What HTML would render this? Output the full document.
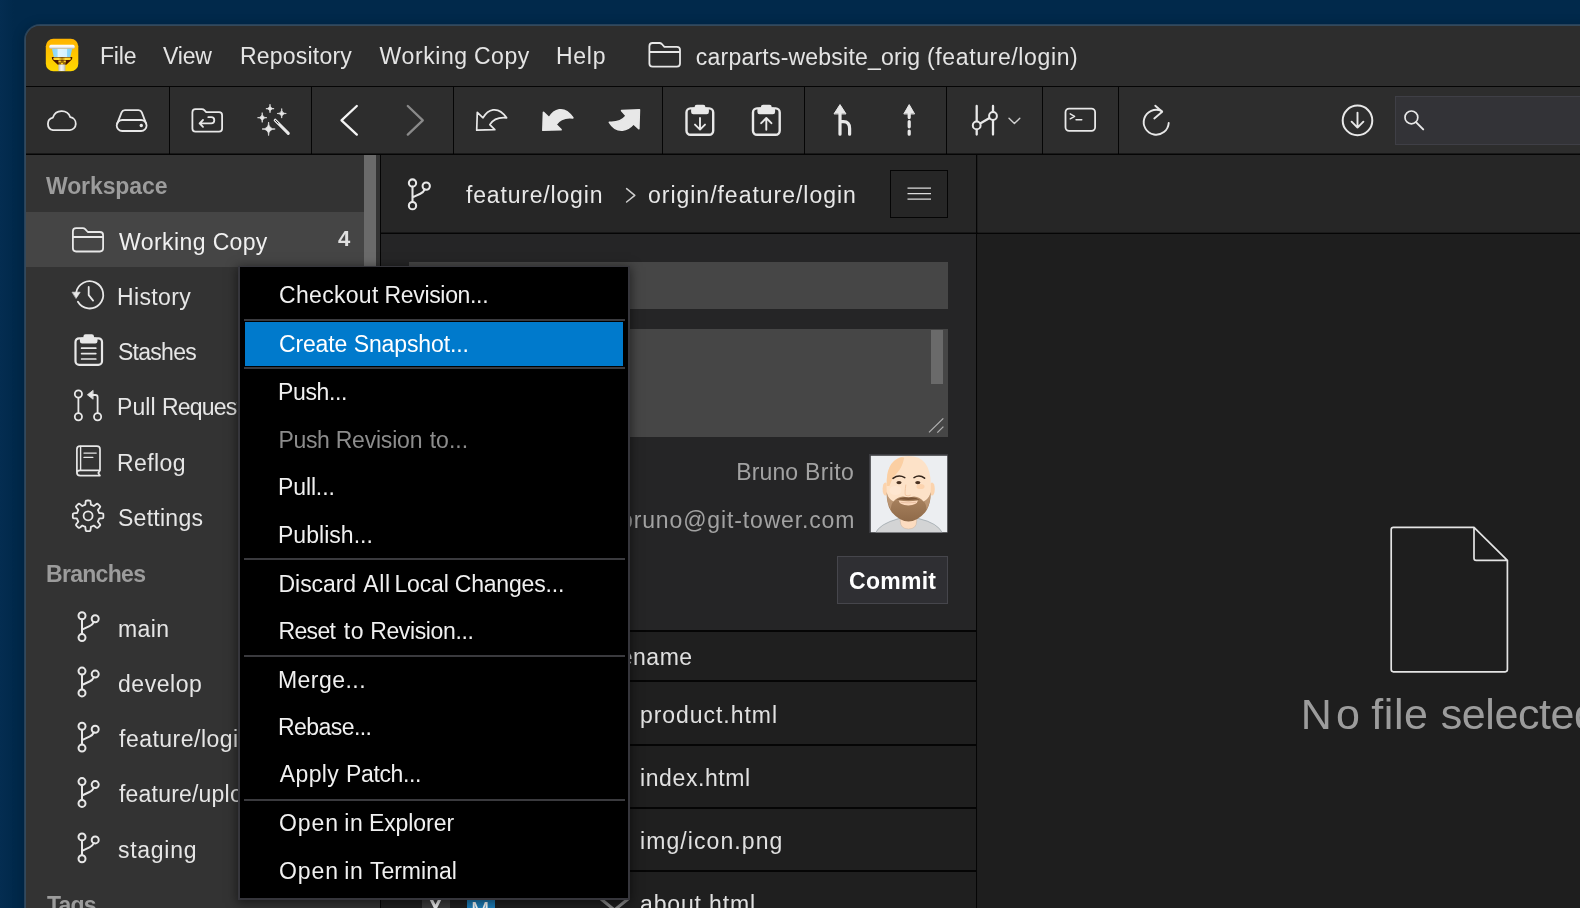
<!DOCTYPE html>
<html lang="en">
<head>
<meta charset="utf-8">
<title>Tower - carparts-website_orig (feature/login)</title>
<style>
html,body{margin:0;padding:0}
body{width:1580px;height:908px;overflow:hidden;position:relative;background:#012a4c;font-family:'Liberation Sans',sans-serif}
.bg{position:absolute;left:0;top:0;width:1580px;height:908px;background:linear-gradient(90deg,#042d51 0,#01294b 14px,#01294b 100%)}
.abs,.t,svg.ov{position:absolute}
.t{will-change:transform;height:60px;line-height:60px;white-space:pre;font-family:'Liberation Sans',sans-serif}
.win{left:25px;top:25px;width:1600px;height:920px;background:#34495b;border-radius:15px 0 0 0;box-shadow:0 0 0 1px #27425b,0 2px 12px 2px rgba(0,0,0,.2)}
.clip{left:0;top:0;width:1580px;height:908px;overflow:hidden;clip-path:inset(26px 0 0 26px round 14px 0 0 0)}
.clip>*{position:absolute}
.w{position:absolute;top:0;height:60px;white-space:pre}
.ln{background:#050505}
</style>
</head>
<body>
<div class="bg"></div>
<div class="abs win"></div>
<div class="abs clip">
<!-- title + toolbar -->
<div style="left:25px;top:25px;width:1555px;height:883px;background:#2d2d2d"></div>
<div style="left:25px;top:25px;width:1555px;height:61px;background:#2d2d2d"></div>
<div class="ln" style="left:25px;top:86px;width:1555px;height:1px"></div>
<div style="left:25px;top:87px;width:1555px;height:67px;background:#2d2d2d"></div>
<div class="ln" style="left:169px;top:87px;width:1px;height:67px"></div>
<div class="ln" style="left:311px;top:87px;width:1px;height:67px"></div>
<div class="ln" style="left:453px;top:87px;width:1px;height:67px"></div>
<div class="ln" style="left:662px;top:87px;width:1px;height:67px"></div>
<div class="ln" style="left:804px;top:87px;width:1px;height:67px"></div>
<div class="ln" style="left:946px;top:87px;width:1px;height:67px"></div>
<div class="ln" style="left:1042px;top:87px;width:1px;height:67px"></div>
<div class="ln" style="left:1118px;top:87px;width:1px;height:67px"></div>

<div class="ln" style="left:25px;top:154px;width:1555px;height:1px;box-shadow:0 -1px 0 rgba(0,0,0,.45)"></div>
<!-- search box -->
<div style="left:1395px;top:96px;width:200px;height:47px;background:#333337;border:1px solid #3f3f46"></div>
<!-- sidebar -->
<div style="left:25px;top:155px;width:356px;height:753px;background:#333333"></div>
<div style="left:25px;top:212px;width:339px;height:55px;background:#454545"></div>
<div style="left:364px;top:155px;width:12px;height:560px;background:#6a6a6a"></div>
<div class="ln" style="left:380px;top:155px;width:1px;height:753px"></div>
<!-- mid panel -->
<div style="left:381px;top:155px;width:595px;height:78px;background:#262626"></div>
<div class="ln" style="left:381px;top:233px;width:1199px;height:1px;box-shadow:0 -1px 0 rgba(0,0,0,.4)"></div>
<div style="left:381px;top:234px;width:595px;height:397px;background:#252526"></div>
<div style="left:890px;top:170px;width:56px;height:46px;border:1px solid #050505;background:#262626"></div>
<div style="left:409px;top:262px;width:539px;height:47px;background:#464646"></div>
<div style="left:409px;top:329px;width:539px;height:108px;background:#464646"></div>
<div style="left:931px;top:330px;width:12px;height:54px;background:#6a6a6a"></div>
<div style="left:837px;top:556px;width:109px;height:46px;background:#2f2f33;border:1px solid #46464c"></div>
<!-- avatar -->
<div style="left:869px;top:454px;width:79px;height:79px;background:#3c3c40"></div>
<!-- file list -->
<div class="ln" style="left:381px;top:630px;width:595px;height:2px"></div>
<div style="left:381px;top:632px;width:595px;height:276px;background:#1f1f1f"></div>
<div class="ln" style="left:381px;top:680px;width:595px;height:2px"></div>
<div class="ln" style="left:381px;top:744px;width:595px;height:2px"></div>
<div class="ln" style="left:381px;top:807px;width:595px;height:2px"></div>
<div class="ln" style="left:381px;top:870px;width:595px;height:2px"></div>
<div style="left:422px;top:890px;width:28px;height:28px;background:#3c3c3c"></div>
<div style="left:467px;top:892px;width:28px;height:28px;background:#1c7db8"></div>
<!-- right panel -->
<div class="ln" style="left:976px;top:155px;width:1px;height:753px;box-shadow:1px 0 0 rgba(0,0,0,.35)"></div>
<div style="left:978px;top:155px;width:602px;height:77px;background:#262626"></div>
<div style="left:978px;top:234px;width:602px;height:674px;background:#1e1e1e"></div>
<svg class="ov" style="left:0;top:0;z-index:2" width="1580" height="908" viewBox="0 0 1580 908" fill="none" stroke="#e8e8e8" stroke-width="1.8" stroke-linecap="round" stroke-linejoin="round">
<!-- title folder -->
<path d="M649.4 46.2Q649.4 43 652.6 43H659.4Q660.8 43 661.8 44L664.4 46.8H676.8Q680 46.8 680 50V63.4Q680 66.6 676.8 66.6H652.6Q649.4 66.6 649.4 63.4ZM649.4 52H680"/>
<!-- cloud -->
<path d="M53 130.1H69.8A6.5 6.5 0 0 0 70.3 117.2A9.2 9.2 0 0 0 52.9 117.6A6.4 6.4 0 0 0 53 130.1Z"/>
<!-- drive -->
<rect x="116.7" y="120" width="29.9" height="11" rx="5.5"/>
<path d="M117.2 123.6L121.6 112.4Q122.5 110.2 124.9 110.2H138.5Q140.9 110.2 141.8 112.4L146.1 123.6"/>
<circle cx="141.3" cy="125.5" r="1.7" fill="#e8e8e8" stroke="none"/>
<!-- folder back -->
<path d="M192.4 112.2Q192.4 109.1 195.5 109.1H201.8Q203.3 109.1 204.3 110.2L206.2 112.2H219Q222.1 112.2 222.1 115.3V128.5Q222.1 131.6 219 131.6H195.5Q192.4 131.6 192.4 128.5Z"/>
<path d="M199.6 123.4H211.2A3.1 3.1 0 0 0 211.2 117.2H208.3M203 120L199.6 123.4L203 126.8"/>
<!-- wand -->
<g fill="#e8e8e8" stroke="none">
<path d="M270 104.6Q270 108.7 274.1 108.7Q270 108.7 270 112.8Q270 108.7 265.900 108.7Q270 108.7 270 104.6Z"/>
<path d="M281.7 108.9Q281.7 113.5 286.3 113.5Q281.7 113.5 281.7 118.1Q281.7 113.5 277.1 113.5Q281.7 113.5 281.7 108.9Z"/>
<path d="M262.2 113Q262.2 117.7 266.9 117.7Q262.2 117.7 262.2 122.4Q262.2 117.7 257.5 117.7Q262.2 117.7 262.2 113Z"/>
<path d="M268.6 122.4Q268.6 129 275.2 129Q268.6 129 268.6 135.6Q268.6 129 262 129Q268.6 129 268.6 122.4Z"/>
</g>
<g stroke-width="0.7" stroke-linejoin="miter"><path d="M270 104.6Q270 108.7 274.1 108.7Q270 108.7 270 112.8Q270 108.7 265.900 108.7Q270 108.7 270 104.6Z"/><path d="M281.7 108.9Q281.7 113.5 286.3 113.5Q281.7 113.5 281.7 118.1Q281.7 113.5 277.1 113.5Q281.7 113.5 281.7 108.9Z"/><path d="M262.2 113Q262.2 117.7 266.9 117.7Q262.2 117.7 262.2 122.4Q262.2 117.7 257.5 117.7Q262.2 117.7 262.2 113Z"/><path d="M268.6 122.4Q268.6 129 275.2 129Q268.6 129 268.6 135.6Q268.6 129 262 129Q268.6 129 268.6 122.4Z"/></g>
<path d="M275.2 120.2L288.3 133.4" stroke-width="3"/>
<path d="M275.4 120.4L278.2 123.2" stroke="#2d2d2d" stroke-width="1"/>
<!-- back / forward -->
<path d="M356.8 106L341.5 120.3L356.8 134.6" stroke="#f4f4f4" stroke-width="2.3"/>
<path d="M407.8 106L422.8 120.3L407.8 134.6" stroke="#8a8a8a" stroke-width="2.3"/>
<!-- fetch (outline) -->
<path d="M477.3 112.4L476.7 130.2L494.8 129.7L489.8 124.6C493 119.5 499 117 506.6 117.8C502 111 497 109.3 493 109.9C488.5 110.6 485.5 113.5 483 117.8Z" stroke-width="1.7"/>
<!-- pull (filled) -->
<path transform="translate(66.2,0)" d="M477.3 112.4L476.7 130.2L494.8 129.7L489.8 124.6C493 119.5 499 117 506.6 117.8C502 111 497 109.3 493 109.9C488.5 110.6 485.5 113.5 483 117.8Z" fill="#e8e8e8" stroke-width="1.7"/>
<!-- push (filled) -->
<path d="M639.4 109.8L621.6 110.7L626.3 115.8C622 121 616.5 122.8 609.4 122.3C613 128.3 618 130.500 622.5 130.200C627 129.800 630.5 127.400 633.6 123.800L638.800 128.700Z" fill="#e8e8e8" stroke-width="1.700"/>
<!-- clipboards -->
<rect x="686.5" y="108.4" width="26.7" height="26.3" rx="4" stroke-width="2.4"/>
<path d="M694.6 106.9Q694.6 104.7 696.8 104.7H703.2Q705.4 104.7 705.4 106.9V107.6H706.6Q708.9 107.6 708.9 109.8V112.1Q708.9 114.3 706.6 114.3H693.4Q691.1 114.3 691.1 112.1V109.8Q691.1 107.6 693.4 107.6H694.6Z" fill="#e8e8e8" stroke="none"/>
<path d="M700 118V129.300M695 124.600L700 129.600L705 124.600" stroke-width="1.900"/>
<rect x="753" y="108.4" width="26.7" height="26.3" rx="4" stroke-width="2.4"/>
<path d="M760.9 106.9Q760.9 104.7 763.1 104.7H769.5Q771.7 104.7 771.7 106.9V107.6H772.9Q775.1 107.6 775.1 109.8V112.1Q775.1 114.3 772.9 114.3H759.6Q757.4 114.3 757.4 112.1V109.8Q757.4 107.6 759.6 107.6H760.9Z" fill="#e8e8e8" stroke="none"/>
<path d="M766.300 129.700V118.200M761.200 123.200L766.300 118L771.400 123.200" stroke-width="1.900"/>
<!-- merge -->
<path d="M840 134.2V112M849.6 134.2V128.5Q849.6 121.6 843.5 121.6H840.5" stroke-width="3.2" stroke-linecap="round"/>
<path d="M834.2 113.6L840 104.6L845.8 113.6Z" fill="#e8e8e8" stroke-width="1"/>
<!-- rebase -->
<path d="M909.2 112V117.6M909.2 121.6V126.8M909.2 131V134.2" stroke-width="3.2"/>
<path d="M904 113.6L909.2 104.6L914.4 113.6Z" fill="#e8e8e8" stroke-width="1"/>
<!-- gitflow -->
<path d="M976.7 106V134.6M993 106V134.6M976.7 125.4L993 116" stroke-width="2.3"/>
<circle cx="976.7" cy="125.4" r="3.9" fill="#2d2d2d" stroke-width="2"/>
<circle cx="993" cy="116" r="3.9" fill="#2d2d2d" stroke-width="2"/>
<path d="M1009 118.2L1014.4 123.6L1019.8 118.2" stroke-width="1.4" stroke="#cfcfcf"/>
<!-- terminal -->
<rect x="1065.5" y="108.7" width="29.6" height="22.1" rx="3.6"/>
<path d="M1070.2 113.8L1074.6 116.3L1070.2 118.8M1076 119.8H1081.8" stroke-width="1.4"/>
<!-- refresh -->
<path d="M1168.700 123A12.500 12.500 0 1 1 1161.500 110.900" stroke-width="1.900"/>
<path d="M1155.300 105.700L1162.200 111.800L1154.300 118.400" stroke-width="1.900"/>
<!-- download -->
<circle cx="1357.5" cy="120.4" r="14.8" stroke-width="2"/>
<path d="M1357.5 112.6V127.6M1351.6 121.7L1357.5 127.6L1363.4 121.7" stroke-width="1.9"/>
<!-- search -->
<circle cx="1411.4" cy="117.4" r="6.4" stroke-width="1.7"/>
<path d="M1416.2 122.4L1423.2 129.4" stroke-width="2"/>
<!-- sidebar folder -->
<path d="M72.9 231.4Q72.9 228.2 76.100 228.2H82.8Q84.2 228.2 85.2 229.2L87.8 232H99.900Q103.100 232 103.100 235.200V248.3Q103.100 251.5 99.900 251.5H76.100Q72.900 251.5 72.900 248.3ZM72.900 237H103.100"/>
<!-- history -->
<path d="M76.200 292.600A13.600 13.600 0 1 1 77.900 301.800" stroke-width="1.800"/>
<path d="M72.400 292.200H80.200L76.200 298.200Z" fill="#e8e8e8" stroke-width="0.600"/>
<path d="M88.700 286.900V295.100L93.100 300.600"/>
<!-- stashes -->
<rect x="75.500" y="338.300" width="26.500" height="26.500" rx="3.600" stroke-width="2.200"/>
<path d="M83.4 336.4Q83.4 334.2 85.6 334.2H91.8Q94.0 334.2 94.0 336.4V337.4H95.3Q97.5 337.4 97.5 339.6V341.3Q97.5 343.5 95.3 343.5H82.1Q79.9 343.5 79.9 341.3V339.6Q79.9 337.4 82.1 337.4H83.4Z" fill="#e8e8e8" stroke="none"/>
<path d="M81.600 348.200H95.800M81.600 353.600H95.800M81.600 359H95.800" stroke-width="1.700"/>
<!-- pull request -->
<circle cx="78.400" cy="394" r="3.600"/><circle cx="78.400" cy="416.800" r="3.600"/><circle cx="97.600" cy="416.800" r="3.600"/>
<path d="M78.400 397.800V413M97.600 413V397.200Q97.600 395 95.400 395H92"/>
<path d="M92.800 390.600L87.400 394.800L92.800 399Z" fill="#e8e8e8" stroke-width="0.800"/>
<!-- reflog -->
<path d="M100 470.4V449.200Q100 446.100 96.900 446.100H80Q76.900 446.100 76.900 449.200V472.400Q76.900 475.600 80.100 475.600H100L98.300 473L100 470.400H80Q76.900 470.400 76.900 473" stroke-width="1.7"/>
<path d="M84 453.100H96.200M84 457.400H92.800M80.600 446.400V470.200" stroke-width="1.400"/>
<!-- gear -->
<g transform="translate(88.100,515.800)"><circle r="4.500" stroke-width="1.800"/><path d="M0.00 -15.30 L0.27 -15.30 L0.53 -15.29 L0.80 -15.28 L1.07 -15.26 L1.33 -15.24 L1.60 -15.22 L1.86 -15.19 L2.12 -15.07 L2.32 -14.68 L2.48 -14.04 L2.58 -13.25 L2.64 -12.43 L2.70 -11.71 L2.79 -11.18 L2.93 -10.92 L3.11 -10.86 L3.30 -10.81 L3.49 -10.75 L3.68 -10.68 L3.86 -10.62 L4.05 -10.55 L4.23 -10.48 L4.42 -10.40 L4.60 -10.32 L4.78 -10.24 L4.95 -10.16 L5.13 -10.07 L5.31 -9.98 L5.48 -9.88 L5.65 -9.79 L5.94 -9.88 L6.37 -10.19 L6.92 -10.66 L7.55 -11.19 L8.18 -11.68 L8.73 -12.02 L9.16 -12.16 L9.42 -12.06 L9.63 -11.89 L9.83 -11.72 L10.04 -11.55 L10.24 -11.37 L10.43 -11.19 L10.63 -11.01 L10.82 -10.82 L11.01 -10.63 L11.19 -10.43 L11.37 -10.24 L11.55 -10.04 L11.72 -9.83 L11.89 -9.63 L12.06 -9.42 L12.16 -9.16 L12.02 -8.73 L11.68 -8.18 L11.19 -7.55 L10.66 -6.92 L10.19 -6.37 L9.88 -5.94 L9.79 -5.65 L9.88 -5.48 L9.98 -5.31 L10.07 -5.13 L10.16 -4.95 L10.24 -4.78 L10.32 -4.60 L10.40 -4.42 L10.48 -4.23 L10.55 -4.05 L10.62 -3.86 L10.68 -3.68 L10.75 -3.49 L10.81 -3.30 L10.86 -3.11 L10.92 -2.93 L11.18 -2.79 L11.71 -2.70 L12.43 -2.64 L13.25 -2.58 L14.04 -2.48 L14.68 -2.32 L15.07 -2.12 L15.19 -1.86 L15.22 -1.60 L15.24 -1.33 L15.26 -1.07 L15.28 -0.80 L15.29 -0.53 L15.30 -0.27 L15.30 -0.00 L15.30 0.27 L15.29 0.53 L15.28 0.80 L15.26 1.07 L15.24 1.33 L15.22 1.60 L15.19 1.86 L15.07 2.12 L14.68 2.32 L14.04 2.48 L13.25 2.58 L12.43 2.64 L11.71 2.70 L11.18 2.79 L10.92 2.93 L10.86 3.11 L10.81 3.30 L10.75 3.49 L10.68 3.68 L10.62 3.86 L10.55 4.05 L10.48 4.23 L10.40 4.42 L10.32 4.60 L10.24 4.78 L10.16 4.95 L10.07 5.13 L9.98 5.31 L9.88 5.48 L9.79 5.65 L9.88 5.94 L10.19 6.37 L10.66 6.92 L11.19 7.55 L11.68 8.18 L12.02 8.73 L12.16 9.16 L12.06 9.42 L11.89 9.63 L11.72 9.83 L11.55 10.04 L11.37 10.24 L11.19 10.43 L11.01 10.63 L10.82 10.82 L10.63 11.01 L10.43 11.19 L10.24 11.37 L10.04 11.55 L9.83 11.72 L9.63 11.89 L9.42 12.06 L9.16 12.16 L8.73 12.02 L8.18 11.68 L7.55 11.19 L6.92 10.66 L6.37 10.19 L5.94 9.88 L5.65 9.79 L5.48 9.88 L5.31 9.98 L5.13 10.07 L4.95 10.16 L4.78 10.24 L4.60 10.32 L4.42 10.40 L4.23 10.48 L4.05 10.55 L3.86 10.62 L3.68 10.68 L3.49 10.75 L3.30 10.81 L3.11 10.86 L2.93 10.92 L2.79 11.18 L2.70 11.71 L2.64 12.43 L2.58 13.25 L2.48 14.04 L2.32 14.68 L2.12 15.07 L1.86 15.19 L1.60 15.22 L1.33 15.24 L1.07 15.26 L0.80 15.28 L0.53 15.29 L0.27 15.30 L0.00 15.30 L-0.27 15.30 L-0.53 15.29 L-0.80 15.28 L-1.07 15.26 L-1.33 15.24 L-1.60 15.22 L-1.86 15.19 L-2.12 15.07 L-2.32 14.68 L-2.48 14.04 L-2.58 13.25 L-2.64 12.43 L-2.70 11.71 L-2.79 11.18 L-2.93 10.92 L-3.11 10.86 L-3.30 10.81 L-3.49 10.75 L-3.68 10.68 L-3.86 10.62 L-4.05 10.55 L-4.23 10.48 L-4.42 10.40 L-4.60 10.32 L-4.78 10.24 L-4.95 10.16 L-5.13 10.07 L-5.31 9.98 L-5.48 9.88 L-5.65 9.79 L-5.94 9.88 L-6.37 10.19 L-6.92 10.66 L-7.55 11.19 L-8.18 11.68 L-8.73 12.02 L-9.16 12.16 L-9.42 12.06 L-9.63 11.89 L-9.83 11.72 L-10.04 11.55 L-10.24 11.37 L-10.43 11.19 L-10.63 11.01 L-10.82 10.82 L-11.01 10.63 L-11.19 10.43 L-11.37 10.24 L-11.55 10.04 L-11.72 9.83 L-11.89 9.63 L-12.06 9.42 L-12.16 9.16 L-12.02 8.73 L-11.68 8.18 L-11.19 7.55 L-10.66 6.92 L-10.19 6.37 L-9.88 5.94 L-9.79 5.65 L-9.88 5.48 L-9.98 5.31 L-10.07 5.13 L-10.16 4.95 L-10.24 4.78 L-10.32 4.60 L-10.40 4.42 L-10.48 4.23 L-10.55 4.05 L-10.62 3.86 L-10.68 3.68 L-10.75 3.49 L-10.81 3.30 L-10.86 3.11 L-10.92 2.93 L-11.18 2.79 L-11.71 2.70 L-12.43 2.64 L-13.25 2.58 L-14.04 2.48 L-14.68 2.32 L-15.07 2.12 L-15.19 1.86 L-15.22 1.60 L-15.24 1.33 L-15.26 1.07 L-15.28 0.80 L-15.29 0.53 L-15.30 0.27 L-15.30 0.00 L-15.30 -0.27 L-15.29 -0.53 L-15.28 -0.80 L-15.26 -1.07 L-15.24 -1.33 L-15.22 -1.60 L-15.19 -1.86 L-15.07 -2.12 L-14.68 -2.32 L-14.04 -2.48 L-13.25 -2.58 L-12.43 -2.64 L-11.71 -2.70 L-11.18 -2.79 L-10.92 -2.93 L-10.86 -3.11 L-10.81 -3.30 L-10.75 -3.49 L-10.68 -3.68 L-10.62 -3.86 L-10.55 -4.05 L-10.48 -4.23 L-10.40 -4.42 L-10.32 -4.60 L-10.24 -4.78 L-10.16 -4.95 L-10.07 -5.13 L-9.98 -5.31 L-9.88 -5.48 L-9.79 -5.65 L-9.88 -5.94 L-10.19 -6.37 L-10.66 -6.92 L-11.19 -7.55 L-11.68 -8.18 L-12.02 -8.73 L-12.16 -9.16 L-12.06 -9.42 L-11.89 -9.63 L-11.72 -9.83 L-11.55 -10.04 L-11.37 -10.24 L-11.19 -10.43 L-11.01 -10.63 L-10.82 -10.82 L-10.63 -11.01 L-10.43 -11.19 L-10.24 -11.37 L-10.04 -11.55 L-9.83 -11.72 L-9.63 -11.89 L-9.42 -12.06 L-9.16 -12.16 L-8.73 -12.02 L-8.18 -11.68 L-7.55 -11.19 L-6.92 -10.66 L-6.37 -10.19 L-5.94 -9.88 L-5.65 -9.79 L-5.48 -9.88 L-5.31 -9.98 L-5.13 -10.07 L-4.95 -10.16 L-4.78 -10.24 L-4.60 -10.32 L-4.42 -10.40 L-4.23 -10.48 L-4.05 -10.55 L-3.86 -10.62 L-3.68 -10.68 L-3.49 -10.75 L-3.30 -10.81 L-3.11 -10.86 L-2.93 -10.92 L-2.79 -11.18 L-2.70 -11.71 L-2.64 -12.43 L-2.58 -13.25 L-2.48 -14.04 L-2.32 -14.68 L-2.12 -15.07 L-1.86 -15.19 L-1.60 -15.22 L-1.33 -15.24 L-1.07 -15.26 L-0.80 -15.28 L-0.53 -15.29 L-0.27 -15.30Z" stroke-width="1.8"/></g>
<!-- branch icons -->
<g transform="translate(77.0,611.4) scale(1.0)" stroke-width="2"><path d="M5 8V22.600M16.800 10.600Q15.500 13.500 12.500 14.800L5 18.300"/><circle cx="5" cy="4.400" r="3.500"/><circle cx="18.200" cy="7.400" r="3.500"/><circle cx="5" cy="26.200" r="3.500"/></g><g transform="translate(77.0,666.7) scale(1.0)" stroke-width="2"><path d="M5 8V22.600M16.800 10.600Q15.500 13.500 12.500 14.800L5 18.300"/><circle cx="5" cy="4.400" r="3.500"/><circle cx="18.200" cy="7.400" r="3.500"/><circle cx="5" cy="26.200" r="3.500"/></g><g transform="translate(77.0,721.9) scale(1.0)" stroke-width="2"><path d="M5 8V22.600M16.800 10.600Q15.500 13.500 12.500 14.800L5 18.300"/><circle cx="5" cy="4.400" r="3.500"/><circle cx="18.200" cy="7.400" r="3.500"/><circle cx="5" cy="26.200" r="3.500"/></g><g transform="translate(77.0,777.2) scale(1.0)" stroke-width="2"><path d="M5 8V22.600M16.800 10.600Q15.500 13.500 12.500 14.800L5 18.300"/><circle cx="5" cy="4.400" r="3.500"/><circle cx="18.200" cy="7.400" r="3.500"/><circle cx="5" cy="26.200" r="3.500"/></g><g transform="translate(77.0,832.5) scale(1.0)" stroke-width="2"><path d="M5 8V22.600M16.800 10.600Q15.500 13.500 12.500 14.800L5 18.300"/><circle cx="5" cy="4.400" r="3.500"/><circle cx="18.200" cy="7.400" r="3.500"/><circle cx="5" cy="26.200" r="3.500"/></g><g transform="translate(407.3,178.4) scale(1.04)" stroke-width="2"><path d="M5 8V22.600M16.800 10.600Q15.500 13.500 12.500 14.800L5 18.300"/><circle cx="5" cy="4.400" r="3.500"/><circle cx="18.200" cy="7.400" r="3.500"/><circle cx="5" cy="26.200" r="3.500"/></g>
<!-- hamburger -->
<path d="M907.500 188.200H931M907.500 193.700H931M907.500 199.200H931" stroke-width="1.2" stroke-linecap="butt" stroke="#dcdcdc"/>
<!-- chevron between branches -->
<path d="M626.600 188.600L634.800 195.300L626.600 202" stroke-width="1.500" stroke="#cfcfcf"/>
<!-- resize grip -->
<path d="M929 432.400L943.300 418.400M937.300 432.600L943.400 426.600" stroke-width="1.300" stroke="#b0b0b0" stroke-linecap="butt"/>
<!-- file icon -->
<path d="M1393.400 527.300H1474L1507.400 560.400V669.600Q1507.400 671.800 1505.200 671.800H1393.400Q1391.200 671.800 1391.200 669.600V529.500Q1391.200 527.300 1393.400 527.300ZM1474 527.300V558.200Q1474 560.400 1476.200 560.400H1507.400" stroke-width="1.700" stroke="#e4e4e4"/>
<!-- bottom row bits -->
<path d="M428.500 892L435.500 906L442.500 892" stroke="#f4f4f4" stroke-width="3" transform="translate(0,2)"/>
<path d="M601 903L614.500 914L628 903" stroke="#8a8a8a" stroke-width="3" transform="translate(0,-4)"/>
<g stroke="none">
<defs><linearGradient id="ay" x1="0" y1="0" x2="0" y2="1"><stop offset="0" stop-color="#ffb400"/><stop offset=".55" stop-color="#ffc800"/><stop offset="1" stop-color="#ffd800"/></linearGradient>
<linearGradient id="ab" x1="0" y1="0" x2="1" y2="0"><stop offset="0" stop-color="#86d4f7"/><stop offset=".26" stop-color="#9adcf9"/><stop offset=".3" stop-color="#e2f6fe"/><stop offset=".72" stop-color="#d4f1fd"/><stop offset=".76" stop-color="#8fd8f8"/><stop offset="1" stop-color="#7fcff5"/></linearGradient>
<linearGradient id="ap" x1="0" y1="0" x2="0" y2="1"><stop offset="0" stop-color="#ffffff"/><stop offset=".55" stop-color="#f2f2f2"/><stop offset="1" stop-color="#b4b4b4"/></linearGradient>
<linearGradient id="ag" x1="0" y1="0" x2="1" y2="0"><stop offset="0" stop-color="#ffd21a"/><stop offset=".3" stop-color="#ffdc3c"/><stop offset=".5" stop-color="#b8860b"/><stop offset=".7" stop-color="#ffdc3c"/><stop offset="1" stop-color="#ffd21a"/></linearGradient>
<linearGradient id="as" x1="0" y1="0" x2="1" y2="0"><stop offset="0" stop-color="#bdbdbd"/><stop offset=".4" stop-color="#f4f4f4"/><stop offset=".7" stop-color="#e2e2e2"/><stop offset="1" stop-color="#b0b0b0"/></linearGradient></defs>
<rect x="45.800" y="38.700" width="32.500" height="32.600" rx="7.600" fill="url(#ay)"/>
<path d="M51.900 48.500H72.200L70.300 57H53.800Z" fill="url(#ab)"/>
<rect x="49.400" y="44.800" width="25.200" height="4" rx="1.500" fill="url(#ap)"/>
<path d="M51.800 57H72.300Q72.500 59.800 70.900 60.500L66.300 64.700H57.800L53.200 60.500Q51.600 59.800 51.800 57Z" fill="#4a1600"/>
<rect x="53.400" y="57.500" width="17.300" height="2.500" rx=".8" fill="url(#ag)"/>
<path d="M58.400 60.400H60.900V62.500H58.400ZM63.400 60.400H65.900V62.500H63.400ZM60.900 62.500H63.400V64.600H60.900Z" fill="#ffd21f"/>
<path d="M60.900 60.400H63.400V62.500H60.900ZM58.600 62.500H60.900V64.600H58.600ZM63.400 62.500H65.600V64.600H63.400Z" fill="#9a6a08"/>
<path d="M58.400 64.500H65.400V71H58.400Z" fill="url(#as)"/>
</g>
<g stroke="none">
<rect x="870.8" y="455.800" width="76.400" height="76.400" fill="#eceef1"/>
<linearGradient id="bd" x1="0" y1="0" x2="0" y2="1"><stop offset="0" stop-color="#c09a76"/><stop offset=".35" stop-color="#a37d5a"/><stop offset="1" stop-color="#8f6a49"/></linearGradient><clipPath id="avc"><rect x="870.8" y="455.800" width="76.400" height="76.400"/></clipPath>
<g clip-path="url(#avc)">
<path d="M875.500 533Q879 524 899 518.500H918.500Q938 523 942.500 533Z" fill="#d3d4d5" stroke="#8d999f" stroke-width=".6"/>
<path d="M900.200 517V521Q900.500 529 908.500 529Q916.500 529 916.700 521V517Z" fill="#fcdcc0" stroke="#c9b3a0" stroke-width=".5"/>
<ellipse cx="885.400" cy="489" rx="2.800" ry="6.600" fill="#fbd3ad"/><ellipse cx="932" cy="489" rx="2.800" ry="6.600" fill="#fbd3ad"/>
<path d="M886.600 488Q885 456 908.500 456Q932 456 930.800 488Q931 504 925 512Q917 521 908.500 521Q900 521 892 512Q886.400 504 886.600 488Z" fill="#fde2c8"/>
<path d="M886.800 486Q885.500 462 901 457.200Q904 457 904.200 458Q902 468 897 473Q892 478 889.500 486Z" fill="#fbcfa3"/>
<ellipse cx="895.500" cy="490.500" rx="6" ry="4.600" fill="#fee6d0"/><ellipse cx="920.500" cy="486.500" rx="4" ry="2.600" fill="#fbd0a8" opacity=".8"/>
<path d="M886.600 492Q888.500 500 893.500 501.500Q897 497.200 903 496.600Q908.500 498.200 914 496.600Q920 497.200 923.500 501.500Q928.500 500 930.800 492Q931 505 925 512.500Q917 521.500 908.500 521.500Q900 521.500 892 512.500Q886.400 505 886.600 492Z" fill="url(#bd)"/>
<path d="M887 494Q889 500 893.500 501.500Q890.500 505 891 510Q887 503 887 494ZM930.400 494Q928.400 500 923.800 501.500Q926.800 505 926.400 510Q930.400 503 930.400 494Z" fill="#c49f7e" opacity=".7"/>
<path d="M896.300 499.800Q902 496 908.300 497.600Q914.500 496 920 499.800Q914 499.300 908.300 500Q902 499.300 896.300 499.800Z" fill="#7b5638"/>
<path d="M898.600 500.600Q908.300 502 918 500.600Q917 505.200 908.300 505.400Q899.600 505.200 898.600 500.600Z" fill="#fbd9bd"/>
<path d="M901 502.400Q908.300 503.400 915.600 502.400" stroke="#d9a988" stroke-width=".5" fill="none"/>
<path d="M893 478.400Q898.500 474.200 904.800 477.600M914 477.600Q919.500 474.200 924.600 478.200" stroke="#33241a" stroke-width="1.500" fill="none" stroke-linecap="round"/>
<ellipse cx="899" cy="482.600" rx="2.600" ry="1.700" fill="#4a3222"/><ellipse cx="917.800" cy="482.600" rx="2.600" ry="1.700" fill="#4a3222"/>
<path d="M905.800 485Q904.600 493 905.400 495.200Q907.900 496.800 910.400 495.200" stroke="#efc09a" stroke-width=".8" fill="none"/>
</g></g>
</svg>

<!-- context menu -->
<div style="left:238px;top:266px;width:388px;height:631px;background:#000;border:2px solid #36363c;border-top-width:1px;box-shadow:0 2px 10px 1px rgba(0,0,0,.5);z-index:10"></div>
<div style="left:245px;top:322px;width:378px;height:44px;background:#007acc;z-index:11"></div>
<div style="left:244px;top:319px;width:381px;height:2px;background:#3a3a3e;z-index:11"></div>
<div style="left:244px;top:367px;width:381px;height:2px;background:#3a3a3e;z-index:11"></div>
<div style="left:244px;top:558px;width:381px;height:2px;background:#3a3a3e;z-index:11"></div>
<div style="left:244px;top:655px;width:381px;height:2px;background:#3a3a3e;z-index:11"></div>
<div style="left:244px;top:799px;width:381px;height:2px;background:#3a3a3e;z-index:11"></div>
<div class="t" style="left:100.2px;top:25.6px;font-size:23px;font-weight:400;color:#e4e4e4;letter-spacing:-0.20px;z-index:1">File</div>
<div class="t" style="left:163.4px;top:25.6px;font-size:23px;font-weight:400;color:#e4e4e4;letter-spacing:-0.20px;z-index:1">View</div>
<div class="t" style="left:240.2px;top:25.6px;font-size:23px;font-weight:400;color:#e4e4e4;letter-spacing:0.20px;z-index:1">Repository</div>
<div class="t" style="left:0;top:25.6px;font-size:23px;font-weight:400;color:#e4e4e4;z-index:1"><span class="w" style="left:379.6px;letter-spacing:0.60px">Working </span><span class="w" style="left:474.0px;letter-spacing:0.50px">Copy</span></div>
<div class="t" style="left:555.8px;top:25.6px;font-size:23px;font-weight:400;color:#e4e4e4;letter-spacing:0.73px;z-index:1">Help</div>
<div class="t" style="left:0;top:26.8px;font-size:23px;font-weight:400;color:#e4e4e4;z-index:1"><span class="w" style="left:695.8px;letter-spacing:0.22px">carparts-website_orig </span><span class="w" style="left:927.0px;letter-spacing:0.63px">(feature/login)</span></div>
<div class="t" style="left:45.8px;top:155.9px;font-size:23px;font-weight:700;color:#9c9c9c;letter-spacing:-0.11px;z-index:1">Workspace</div>
<div class="t" style="left:0;top:211.7px;font-size:23px;font-weight:400;color:#f0f0f0;z-index:1"><span class="w" style="left:119.0px;letter-spacing:0.42px">Working </span><span class="w" style="left:212.7px;letter-spacing:0.27px">Copy</span></div>
<div class="t" style="left:337.7px;top:209.1px;font-size:22px;font-weight:700;color:#e0e0e0;letter-spacing:0.00px;z-index:1">4</div>
<div class="t" style="left:116.9px;top:267.0px;font-size:23px;font-weight:400;color:#e6e6e6;letter-spacing:0.35px;z-index:1">History</div>
<div class="t" style="left:117.9px;top:322.3px;font-size:23px;font-weight:400;color:#e6e6e6;letter-spacing:-0.73px;z-index:1">Stashes</div>
<div class="t" style="left:0;top:377.1px;font-size:23px;font-weight:400;color:#e6e6e6;z-index:1"><span class="w" style="left:117.0px;letter-spacing:0.07px">Pull </span><span class="w" style="left:161.9px;letter-spacing:-0.78px;width:75.2px;overflow:hidden">Requests</span></div>
<div class="t" style="left:116.9px;top:432.8px;font-size:23px;font-weight:400;color:#e6e6e6;letter-spacing:0.42px;z-index:1">Reflog</div>
<div class="t" style="left:117.9px;top:487.8px;font-size:23px;font-weight:400;color:#e6e6e6;letter-spacing:0.27px;z-index:1">Settings</div>
<div class="t" style="left:45.5px;top:543.7px;font-size:23px;font-weight:700;color:#9c9c9c;letter-spacing:-0.70px;z-index:1">Branches</div>
<div class="t" style="left:118.2px;top:598.6px;font-size:23px;font-weight:400;color:#e6e6e6;letter-spacing:0.40px;z-index:1">main</div>
<div class="t" style="left:118.2px;top:653.7px;font-size:23px;font-weight:400;color:#e6e6e6;letter-spacing:0.55px;z-index:1">develop</div>
<div class="t" style="left:119.2px;top:709.0px;font-size:23px;font-weight:400;color:#e6e6e6;letter-spacing:0.49px;z-index:1">feature/login</div>
<div class="t" style="left:119.2px;top:764.2px;font-size:23px;font-weight:400;color:#e6e6e6;letter-spacing:0.20px;z-index:1">feature/upload</div>
<div class="t" style="left:118.2px;top:819.5px;font-size:23px;font-weight:400;color:#e6e6e6;letter-spacing:0.72px;z-index:1">staging</div>
<div class="t" style="left:46.5px;top:874.8px;font-size:23px;font-weight:700;color:#9c9c9c;letter-spacing:-0.83px;z-index:1">Tags</div>
<div class="t" style="left:0;top:265.0px;font-size:23px;font-weight:400;color:#f0f0f0;z-index:12"><span class="w" style="left:279.1px;letter-spacing:0.29px">Checkout </span><span class="w" style="left:384.5px;letter-spacing:-0.33px">Revision...</span></div>
<div class="t" style="left:0;top:313.7px;font-size:23px;font-weight:400;color:#ffffff;z-index:12"><span class="w" style="left:279.1px;letter-spacing:-0.18px">Create </span><span class="w" style="left:353.7px;letter-spacing:-0.11px">Snapshot...</span></div>
<div class="t" style="left:278.0px;top:362.0px;font-size:23px;font-weight:400;color:#f0f0f0;letter-spacing:-0.35px;z-index:12">Push...</div>
<div class="t" style="left:0;top:409.8px;font-size:23px;font-weight:400;color:#8c8c8c;z-index:12"><span class="w" style="left:278.6px;letter-spacing:-0.37px">Push </span><span class="w" style="left:335.7px;letter-spacing:-0.21px">Revision </span><span class="w" style="left:429.7px;letter-spacing:0.03px">to...</span></div>
<div class="t" style="left:278.0px;top:457.3px;font-size:23px;font-weight:400;color:#f0f0f0;letter-spacing:-0.12px;z-index:12">Pull...</div>
<div class="t" style="left:278.0px;top:505.0px;font-size:23px;font-weight:400;color:#f0f0f0;letter-spacing:0.03px;z-index:12">Publish...</div>
<div class="t" style="left:0;top:554.0px;font-size:23px;font-weight:400;color:#f0f0f0;z-index:12"><span class="w" style="left:278.6px;letter-spacing:-0.08px">Discard </span><span class="w" style="left:363.3px;letter-spacing:0.60px">All </span><span class="w" style="left:394.5px;letter-spacing:-0.17px">Local </span><span class="w" style="left:454.7px;letter-spacing:-0.17px">Changes...</span></div>
<div class="t" style="left:0;top:601.2px;font-size:23px;font-weight:400;color:#f0f0f0;z-index:12"><span class="w" style="left:278.6px;letter-spacing:-0.70px">Reset </span><span class="w" style="left:343.7px;letter-spacing:0.60px">to </span><span class="w" style="left:370.2px;letter-spacing:-0.37px">Revision...</span></div>
<div class="t" style="left:278.0px;top:649.8px;font-size:23px;font-weight:400;color:#f0f0f0;letter-spacing:0.46px;z-index:12">Merge...</div>
<div class="t" style="left:278.0px;top:697.0px;font-size:23px;font-weight:400;color:#f0f0f0;letter-spacing:-0.56px;z-index:12">Rebase...</div>
<div class="t" style="left:0;top:744.4px;font-size:23px;font-weight:400;color:#f0f0f0;z-index:12"><span class="w" style="left:279.8px;letter-spacing:0.35px">Apply </span><span class="w" style="left:346.1px;letter-spacing:-0.40px">Patch...</span></div>
<div class="t" style="left:0;top:793.3px;font-size:23px;font-weight:400;color:#f0f0f0;z-index:12"><span class="w" style="left:279.1px;letter-spacing:0.87px">Open </span><span class="w" style="left:344.2px;letter-spacing:0.80px">in </span><span class="w" style="left:368.9px;letter-spacing:-0.07px">Explorer</span></div>
<div class="t" style="left:0;top:841.0px;font-size:23px;font-weight:400;color:#f0f0f0;z-index:12"><span class="w" style="left:279.1px;letter-spacing:0.87px">Open </span><span class="w" style="left:344.2px;letter-spacing:0.80px">in </span><span class="w" style="left:369.9px;letter-spacing:0.01px">Terminal</span></div>
<div class="t" style="left:466.0px;top:164.7px;font-size:23px;font-weight:400;color:#e8e8e8;letter-spacing:0.82px;z-index:1">feature/login</div>
<div class="t" style="left:648.0px;top:164.7px;font-size:23px;font-weight:400;color:#e8e8e8;letter-spacing:0.98px;z-index:1">origin/feature/login</div>
<div class="t" style="left:0;top:441.9px;font-size:23px;font-weight:400;color:#a2a2a2;z-index:1"><span class="w" style="left:736.2px;letter-spacing:0.15px">Bruno </span><span class="w" style="left:804.9px;letter-spacing:0.40px">Brito</span></div>
<div class="t" style="left:620.0px;top:489.9px;font-size:23px;font-weight:400;color:#a2a2a2;letter-spacing:0.86px;z-index:1">bruno@git-tower.com</div>
<div class="t" style="left:849.0px;top:551.0px;font-size:23px;font-weight:700;color:#ffffff;letter-spacing:0.28px;z-index:1">Commit</div>
<div class="t" style="left:594.2px;top:627.4px;font-size:23px;font-weight:400;color:#e0e0e0;letter-spacing:0.50px;z-index:1">Filename</div>
<div class="t" style="left:640.0px;top:684.8px;font-size:23px;font-weight:400;color:#e0e0e0;letter-spacing:0.95px;z-index:1">product.html</div>
<div class="t" style="left:640.0px;top:747.8px;font-size:23px;font-weight:400;color:#e0e0e0;letter-spacing:0.60px;z-index:1">index.html</div>
<div class="t" style="left:640.0px;top:811.0px;font-size:23px;font-weight:400;color:#e0e0e0;letter-spacing:1.09px;z-index:1">img/icon.png</div>
<div class="t" style="left:640.0px;top:874.2px;font-size:23px;font-weight:400;color:#e0e0e0;letter-spacing:0.86px;z-index:1">about.html</div>
<div class="t" style="left:470.5px;top:879.9px;font-size:22px;font-weight:400;color:#ffffff;letter-spacing:0.00px;z-index:1">M</div>
<div class="t" style="left:0;top:683.5px;font-size:43px;font-weight:400;color:#9c9c9c;z-index:1"><span class="w" style="left:1300.8px;letter-spacing:4.10px">No </span><span class="w" style="left:1371.2px;letter-spacing:0.60px">file </span><span class="w" style="left:1440.8px;letter-spacing:-0.43px">selected</span></div>
</div>
</body>
</html>
